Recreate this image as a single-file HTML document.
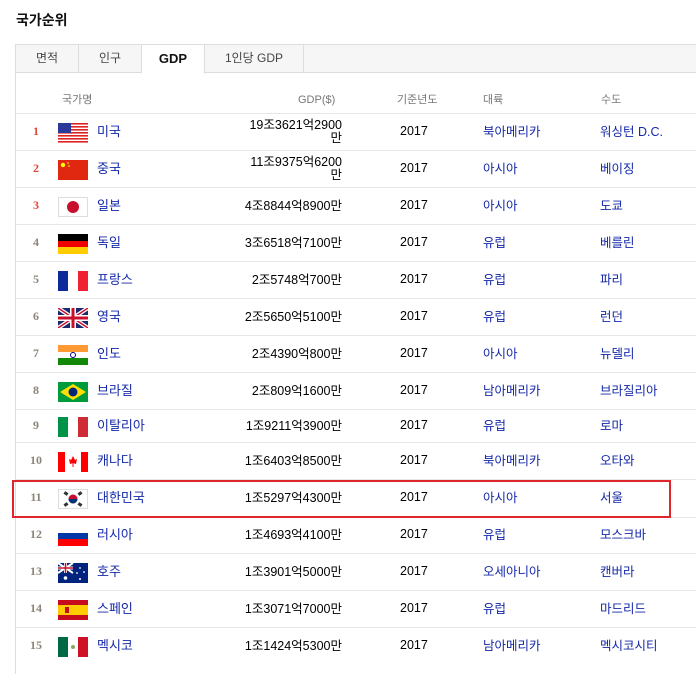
<!DOCTYPE html>
<html><head><meta charset="utf-8"><style>
*{margin:0;padding:0;box-sizing:border-box}
body{width:696px;height:664px;overflow:hidden;background:#fff;font-family:"Liberation Sans","Noto Sans CJK KR",sans-serif;font-size:12px;color:#000;position:relative;line-height:16px}
h1{position:absolute;left:16px;top:12px;font-size:14px;font-weight:bold;color:#111}
.box{position:absolute;left:15px;top:44px;width:690px;height:630px;border-left:1px solid #ddd;border-top:1px solid #ddd}
.tabs{position:absolute;left:0;top:0;width:690px;height:28px;background:#f6f6f6;border-bottom:1px solid #ddd}
.tab{position:absolute;top:0;height:28px;line-height:27px;text-align:center;color:#444;font-size:12px;border-right:1px solid #ddd}
.tab.on{background:#fff;height:29px;color:#111;font-weight:bold;font-size:13px}
.th{position:absolute;top:48px;color:#777;font-size:11px;line-height:14px}
.row{position:absolute;left:0;width:690px;border-top:1px solid #e6e6e6}
.row div{line-height:16px}
.rk{position:absolute;left:10px;width:22px;text-align:center;font-family:"Liberation Serif",serif;font-weight:bold;font-size:12px;color:#8d8577}
.rk.r{color:#e0483a}
.fl{position:absolute;left:43px;width:30px;height:20px;overflow:hidden}
.nm{position:absolute;left:82px;color:#1428a8;font-size:13px}
.gd{position:absolute;left:200px;width:127px;text-align:right;font-size:12.5px}
.row .gd.two{line-height:13px}
.yr{position:absolute;left:385px;font-size:12.5px}
.ct{position:absolute;left:468px;color:#1428a8;font-size:12.5px}
.cp{position:absolute;left:585px;color:#1428a8;font-size:12.5px}
.hl{position:absolute;left:12px;top:480px;width:659px;height:38px;border:2px solid #e0262d}
</style></head><body>
<h1>국가순위</h1>
<div class="box">
<div class="tabs">
<div class="tab" style="left:0;width:63px">면적</div>
<div class="tab" style="left:63px;width:63px">인구</div>
<div class="tab on" style="left:126px;width:63px">GDP</div>
<div class="tab" style="left:189px;width:99px">1인당 GDP</div>
</div>
<div class="th" style="left:46px">국가명</div>
<div class="th" style="left:282px">GDP($)</div>
<div class="th" style="left:381px">기준년도</div>
<div class="th" style="left:467px">대륙</div>
<div class="th" style="left:585px">수도</div>
</div>
<div id="rows" style="position:absolute;left:15px;top:0"></div>
<div class="hl"></div>
<script>
const F={
us:'<svg width="30" height="20"><rect width="30" height="20" fill="#fff"/>'+[0,3,6,9,12,15,18].map(y=>`<rect y="${y}" width="30" height="1.6" fill="#d22"/>`).join('')+'<rect width="13" height="10" fill="#2b3a9a"/></svg>',
cn:'<svg width="30" height="20"><rect width="30" height="20" fill="#e02810"/><circle cx="5" cy="5" r="2.2" fill="#ff0"/><circle cx="10" cy="3" r=".8" fill="#ff0"/><circle cx="11" cy="6" r=".8" fill="#ff0"/></svg>',
jp:'<svg width="30" height="20"><rect x=".5" y=".5" width="29" height="19" fill="#fff" stroke="#ddd"/><circle cx="15" cy="10" r="6" fill="#c8102e"/></svg>',
de:'<svg width="30" height="20"><rect width="30" height="7" fill="#000"/><rect y="7" width="30" height="6" fill="#e00"/><rect y="13" width="30" height="7" fill="#fc0"/></svg>',
fr:'<svg width="30" height="20"><rect width="10" height="20" fill="#0c2a9a"/><rect x="10" width="10" height="20" fill="#fff"/><rect x="20" width="10" height="20" fill="#ee2233"/></svg>',
gb:'<svg width="30" height="20"><rect width="30" height="20" fill="#1a2a6c"/><path d="M0 0L30 20M30 0L0 20" stroke="#fff" stroke-width="4"/><path d="M0 0L30 20M30 0L0 20" stroke="#c8102e" stroke-width="1.5"/><path d="M15 0V20M0 10H30" stroke="#fff" stroke-width="6"/><path d="M15 0V20M0 10H30" stroke="#c8102e" stroke-width="3"/></svg>',
in:'<svg width="30" height="20"><rect width="30" height="7" fill="#f93"/><rect y="7" width="30" height="6" fill="#fff"/><rect y="13" width="30" height="7" fill="#138808"/><circle cx="15" cy="10" r="2.5" fill="none" stroke="#008"/></svg>',
br:'<svg width="30" height="20"><rect width="30" height="20" fill="#009b3a"/><path d="M15 2L28 10L15 18L2 10Z" fill="#fedf00"/><circle cx="15" cy="10" r="4.5" fill="#002776"/></svg>',
it:'<svg width="30" height="20"><rect width="10" height="20" fill="#009246"/><rect x="10" width="10" height="20" fill="#fff"/><rect x="20" width="10" height="20" fill="#ce2b37"/></svg>',
ca:'<svg width="30" height="20"><rect width="30" height="20" fill="#fff"/><rect width="7" height="20" fill="#f00"/><rect x="23" width="7" height="20" fill="#f00"/><path d="M15 4L17 8L19 7L18 12L15 11L12 12L11 7L13 8Z" fill="#f00"/><rect x="14.5" y="11" width="1" height="4" fill="#f00"/></svg>',
kr:'<svg width="30" height="20"><rect x=".5" y=".5" width="29" height="19" fill="#fff" stroke="#ddd"/><circle cx="15" cy="10" r="4.5" fill="#c60c30"/><path d="M10.5 10a4.5 4.5 0 0 0 9 0z" fill="#003478"/><g fill="#333"><rect x="6" y="3" width="4" height="3" transform="rotate(35 8 4.5)"/><rect x="20" y="3" width="4" height="3" transform="rotate(-35 22 4.5)"/><rect x="6" y="14" width="4" height="3" transform="rotate(-35 8 15.5)"/><rect x="20" y="14" width="4" height="3" transform="rotate(35 22 15.5)"/></g></svg>',
ru:'<svg width="30" height="20"><rect width="30" height="7" fill="#fff"/><rect y="7" width="30" height="6" fill="#0039a6"/><rect y="13" width="30" height="7" fill="#f00"/></svg>',
au:'<svg width="30" height="20"><rect width="30" height="20" fill="#00247d"/><path d="M0 0L15 10M15 0L0 10" stroke="#fff" stroke-width="2"/><path d="M7.5 0V10M0 5H15" stroke="#fff" stroke-width="3"/><path d="M7.5 0V10M0 5H15" stroke="#c8102e" stroke-width="1.5"/><g fill="#fff"><circle cx="7.5" cy="15" r="1.8"/><circle cx="22" cy="5" r=".9"/><circle cx="26" cy="9" r=".9"/><circle cx="22" cy="16" r="1"/><circle cx="19" cy="10" r=".9"/></g></svg>',
es:'<svg width="30" height="20"><rect width="30" height="20" fill="#c60b1e"/><rect y="5" width="30" height="10" fill="#fc0"/><rect x="7" y="7" width="4" height="6" fill="#c60b1e"/></svg>',
mx:'<svg width="30" height="20"><rect width="10" height="20" fill="#006847"/><rect x="10" width="10" height="20" fill="#fff"/><rect x="20" width="10" height="20" fill="#ce1126"/><circle cx="15" cy="10" r="2" fill="#8a6"/></svg>'
};
const D=[
[1,'us','미국','19조3621억2900<br>만','북아메리카','워싱턴 D.C.',37],
[2,'cn','중국','11조9375억6200<br>만','아시아','베이징',37],
[3,'jp','일본','4조8844억8900만','아시아','도쿄',37],
[4,'de','독일','3조6518억7100만','유럽','베를린',37],
[5,'fr','프랑스','2조5748억700만','유럽','파리',37],
[6,'gb','영국','2조5650억5100만','유럽','런던',37],
[7,'in','인도','2조4390억800만','아시아','뉴델리',37],
[8,'br','브라질','2조809억1600만','남아메리카','브라질리아',37],
[9,'it','이탈리아','1조9211억3900만','유럽','로마',33],
[10,'ca','캐나다','1조6403억8500만','북아메리카','오타와',37],
[11,'kr','대한민국','1조5297억4300만','아시아','서울',38],
[12,'ru','러시아','1조4693억4100만','유럽','모스크바',36],
[13,'au','호주','1조3901억5000만','오세아니아','캔버라',37],
[14,'es','스페인','1조3071억7000만','유럽','마드리드',37],
[15,'mx','멕시코','1조1424억5300만','남아메리카','멕시코시티',37]];
let y=113,h='';
for(const d of D){const H=d[6],c=H/2,two=d[3].includes('<br>');
h+=`<div class="row" style="top:${y}px;height:${H}px">
<div class="rk${d[0]<4?' r':''}" style="top:${c-10}px">${d[0]}</div>
<div class="fl" style="top:${c-10}px">${F[d[1]]}</div>
<div class="nm" style="top:${c-9}px">${d[2]}</div>
<div class="gd${two?' two':''}" style="top:${two?c-14:c-9}px">${d[3]}</div>
<div class="yr" style="top:${c-10}px">2017</div>
<div class="ct" style="top:${c-9}px">${d[4]}</div>
<div class="cp" style="top:${c-9}px">${d[5]}</div></div>`;y+=H;}
document.getElementById('rows').innerHTML=h;
</script>
</body></html>
